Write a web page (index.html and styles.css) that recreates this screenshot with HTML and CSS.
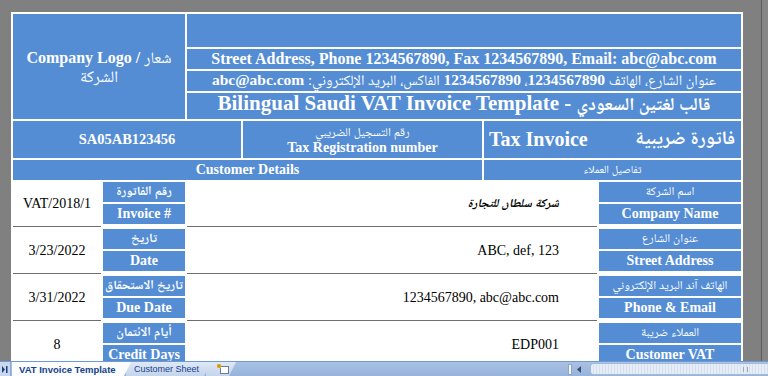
FILE: index.html
```html
<!DOCTYPE html>
<html lang="en">
<head>
    <meta charset="UTF-8">
    <meta name="viewport" content="width=device-width, initial-scale=1.0">
    <title>VAT Invoice Template</title>
    <link rel="stylesheet" href="styles.css">
</head>
<body>
    <div class="window">
        <div class="sheet">
            <!-- Header block -->
            <div class="head">
                <div class="cell logo">
                    <div>Company Logo / <span class="ar-light">شعار</span></div>
                    <div class="ar-light">الشركة</div>
                </div>
                <div class="cell"></div>
                <div class="cell addr">Street Address, Phone 1234567890, Fax 1234567890, Email: abc@abc.com</div>
                <div class="cell addr-ar"><span dir="rtl">عنوان الشارع، الهاتف <b>1234567890</b>، <b>1234567890</b> الفاكس، البريد الإلكتروني: <b>abc@abc.com</b></span></div>
                <div class="cell title"><span>Bilingual Saudi VAT Invoice Template - <span class="title-ar">قالب لغتين السعودي</span></span></div>
            </div>

            <div class="row-trn">
                <div class="cell trn-no">SA05AB123456</div>
                <div class="cell trn">
                    <div class="ar-light small">رقم التسجيل الضريبي</div>
                    <div>Tax Registration number</div>
                </div>
                <div class="cell tax-title">
                    <span>Tax Invoice</span>
                    <span class="tax-ar">فاتورة ضريبية</span>
                </div>
            </div>

            <div class="row-customer">
                <div class="cell">Customer Details</div>
                <div class="cell ar-light customer-ar">تفاصيل العملاء</div>
            </div>

            <!-- Invoice / customer rows -->
            <div class="group">
                <div class="value">VAT/2018/1</div>
                <div class="labels">
                    <div class="cell label-ar">رقم الفاتورة</div>
                    <div class="cell">Invoice #</div>
                </div>
                <div class="value wide"><span class="company-ar">شركة سلطان للتجارة</span></div>
                <div class="labels">
                    <div class="cell ar-light small">اسم الشركة</div>
                    <div class="cell">Company Name</div>
                </div>
            </div>

            <div class="group">
                <div class="value">3/23/2022</div>
                <div class="labels">
                    <div class="cell label-ar">تاريخ</div>
                    <div class="cell">Date</div>
                </div>
                <div class="value wide">ABC, def, 123</div>
                <div class="labels">
                    <div class="cell ar-light small">عنوان الشارع</div>
                    <div class="cell">Street Address</div>
                </div>
            </div>

            <div class="group">
                <div class="value">3/31/2022</div>
                <div class="labels">
                    <div class="cell label-ar">تاريخ الاستحقاق</div>
                    <div class="cell">Due Date</div>
                </div>
                <div class="value wide">1234567890, abc@abc.com</div>
                <div class="labels">
                    <div class="cell ar-light small">الهاتف آند البريد الإلكتروني</div>
                    <div class="cell">Phone &amp; Email</div>
                </div>
            </div>

            <div class="group">
                <div class="value">8</div>
                <div class="labels">
                    <div class="cell label-ar">أيام الائتمان</div>
                    <div class="cell">Credit Days</div>
                </div>
                <div class="value wide">EDP001</div>
                <div class="labels">
                    <div class="cell ar-light small">العملاء ضريبة</div>
                    <div class="cell">Customer VAT</div>
                </div>
            </div>
        </div>
    </div>

    <!-- Sheet tabs -->
    <div class="tabbar">
        <div class="nav">
            <svg width="6" height="7" viewBox="0 0 6 7"><path d="M0 0 L3 3.5 L0 7 Z" fill="#1d3f7a"/><rect x="4" y="0" width="1.5" height="7" fill="#1d3f7a"/></svg>
        </div>
        <div class="tab active">VAT Invoice Template</div>
        <div class="tab">Customer Sheet</div>
        <div class="tab add">
            <svg width="14" height="10" viewBox="0 0 14 10">
                <rect x="4.5" y="2.5" width="8" height="7" fill="#fff" stroke="#6b7f99"/>
                <rect x="1" y="0" width="4" height="4" fill="#f2c230"/>
                <path d="M3 0 V4 M1 2 H5" stroke="#c08a10" stroke-width="1"/>
            </svg>
        </div>
        <div class="spacer"></div>
        <div class="scroll">
            <div class="split"></div>
            <svg class="arrow" width="4" height="7" viewBox="0 0 4 7"><path d="M4 0 L0 3.5 L4 7 Z" fill="#3a4f6e"/></svg>
            <div class="track"><span class="grip"></span></div>
        </div>
    </div>
</body>
</html>
```

FILE: styles.css
```css
/* Page */
* {
    box-sizing: border-box;
}

body {
    margin: 0;
    width: 768px;
    height: 376px;
    overflow: hidden;
    font-family: "Liberation Serif", "Noto Naskh Arabic", "Noto Sans Arabic", "DejaVu Sans", serif;
    background: #808080;
}

.window {
    height: 361px;
    overflow: hidden;
    padding: 12px 0 0 11px;
    background: linear-gradient(to right, #808080 761px, #5c5c5c 761px, #5c5c5c 762px, #868686 762px);
}

.sheet {
    width: 732px;
    background: #fff;
    padding: 2px;
    display: flex;
    flex-direction: column;
    gap: 2px;
}

/* Blue cells */
.cell {
    background: #548dd4;
    color: #fff;
    font-weight: bold;
    font-size: 14px;
    display: flex;
    align-items: center;
    justify-content: center;
    text-align: center;
    white-space: nowrap;
}

.ar-light {
    font-weight: normal;
}

.small {
    font-size: 12px;
}

.label-ar {
    font-size: 12.5px;
}

/* Header */
.head {
    display: grid;
    grid-template-columns: 172px 554px;
    grid-template-rows: 33px 20px 20px 26px;
    gap: 2px;
}

.logo {
    grid-row: 1 / 5;
    flex-direction: column;
    font-size: 16px;
    line-height: 19px;
}

.addr {
    font-size: 16px;
}

.addr-ar {
    font-size: 14.5px;
    font-weight: normal;
}

.addr-ar b {
    font-size: 15.5px;
}

.title {
    font-size: 21px;
}

.title-ar {
    font-size: 18px;
}

.row-trn {
    display: grid;
    grid-template-columns: 228px 239px 257px;
    gap: 2px;
    height: 37px;
}

.trn-no {
    font-size: 14.5px;
}

.trn {
    flex-direction: column;
    line-height: 16px;
}

.tax-title {
    justify-content: space-between;
    padding: 0 6px 0 5px;
    font-size: 20px;
}

.tax-ar {
    font-size: 19px;
}

.row-customer {
    display: grid;
    grid-template-columns: 469px 257px;
    gap: 2px;
    height: 20px;
}

.customer-ar {
    font-size: 11px;
}

/* Data groups */
.group {
    display: grid;
    grid-template-columns: 88px 82px 410px 142px;
    column-gap: 2px;
    height: 45px;
}

.value {
    border-bottom: 1px solid #6f6f6f;
    display: flex;
    align-items: center;
    justify-content: center;
    font-size: 14px;
    color: #000;
}

.value.wide {
    justify-content: flex-end;
    padding-right: 38px;
}

.company-ar {
    font-weight: bold;
    font-style: italic;
    font-size: 12px;
}

.labels {
    display: flex;
    flex-direction: column;
    gap: 2px;
}

.labels .cell {
    height: 20px;
}

/* Tab bar */
.tabbar {
    height: 15px;
    display: flex;
    background: linear-gradient(#a9c1e3, #97b3dc);
    border-top: 1px solid #7199d3;
    font-family: "Liberation Sans", Arial, sans-serif;
    color: #15428b;
}

.nav {
    width: 11px;
    display: flex;
    align-items: center;
    justify-content: center;
    background: #c9d8ee;
    border-right: 1px solid #8faad2;
}

.tab {
    height: 14px;
    display: flex;
    align-items: center;
    padding: 0 12px 0 8px;
    font-size: 9px;
    background: linear-gradient(#dfe8f5, #c4d4ec);
    clip-path: polygon(0 0, 100% 0, calc(100% - 7px) 100%, 0 100%);
    margin-right: -5px;
}

.tab.active {
    width: 119px;
    padding-left: 7px;
    font-size: 9.5px;
    font-weight: bold;
    background: #fbfcfe;
    z-index: 2;
    margin-left: 1px;
}

.tab.add {
    width: 30px;
    padding: 0 0 0 10px;
}

.spacer {
    flex: 1;
}

.scroll {
    width: 200px;
    display: flex;
    align-items: center;
    gap: 5px;
}

.split {
    width: 4px;
    height: 11px;
    background: #f4f7fb;
    border: 1px solid #8ea7c8;
}

.arrow {
    margin-right: 4px;
}

.track {
    flex: 1;
    height: 12px;
    position: relative;
    background: repeating-linear-gradient(90deg, #e6edf7 0 2px, #d6e1ef 2px 3px);
    border: 1px solid #a4bad8;
    border-right: none;
    border-radius: 3px 0 0 3px;
}

.grip {
    position: absolute;
    left: 152px;
    top: 3px;
    width: 5px;
    height: 5px;
    border-left: 1px solid #9aa9bd;
    border-right: 1px solid #9aa9bd;
}
```
